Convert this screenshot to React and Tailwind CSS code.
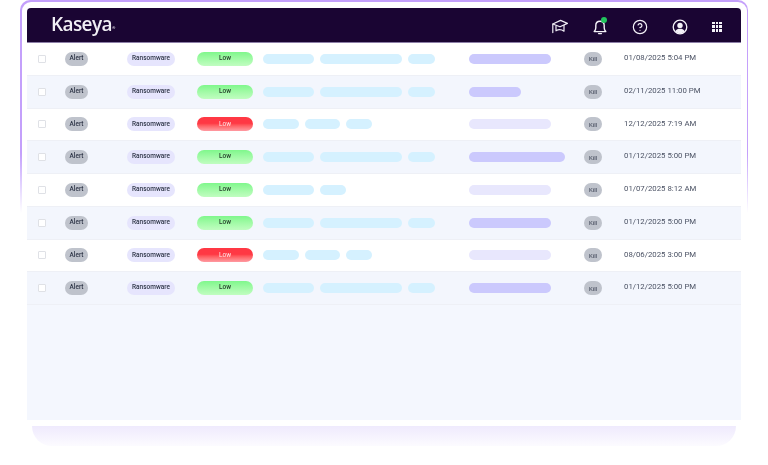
import React from 'react';
import { CircleHelp } from 'lucide-react';

const rows = [
  { level: 'ok', cyan: ['w-[51px]', 'w-[82px]', 'w-[27px]'], bar: 'w-[82px] bg-[#cbc9fd]', date: '01/08/2025 5:04 PM' },
  { level: 'ok', cyan: ['w-[51px]', 'w-[82px]', 'w-[27px]'], bar: 'w-[52px] bg-[#cbc9fd]', date: '02/11/2025 11:00 PM' },
  { level: 'bad', cyan: ['w-[36px]', 'w-[35px]', 'w-[26px]'], bar: 'w-[82px] bg-[#e8e7fd]', date: '12/12/2025 7:19 AM' },
  { level: 'ok', cyan: ['w-[51px]', 'w-[82px]', 'w-[27px]'], bar: 'w-[96px] bg-[#cbc9fd]', date: '01/12/2025 5:00 PM' },
  { level: 'ok', cyan: ['w-[51px]', 'w-[26px]'], bar: 'w-[82px] bg-[#e8e7fd]', date: '01/07/2025 8:12 AM' },
  { level: 'ok', cyan: ['w-[51px]', 'w-[82px]', 'w-[27px]'], bar: 'w-[82px] bg-[#cbc9fd]', date: '01/12/2025 5:00 PM' },
  { level: 'bad', cyan: ['w-[36px]', 'w-[35px]', 'w-[26px]'], bar: 'w-[82px] bg-[#e8e7fd]', date: '08/06/2025 3:00 PM' },
  { level: 'ok', cyan: ['w-[51px]', 'w-[82px]', 'w-[27px]'], bar: 'w-[82px] bg-[#cbc9fd]', date: '01/12/2025 5:00 PM' },
];

function CapIcon() {
  return (
    <svg width="16" height="16" viewBox="0 0 16 16" fill="none" stroke="#f0eef5" strokeWidth="1.2" strokeLinejoin="round">
      <path d="M.8 5 8.6 1.4 15.4 4.4 8 7.8Z" />
      <path d="M4 6.8v5c2.4-1.4 5.4-1.4 8 .4V6" />
      <path d="M.8 5v8.6" strokeLinecap="round" />
    </svg>
  );
}

function BellIcon() {
  return (
    <span className="relative block h-[16px] w-[16px]">
      <svg width="16" height="16" viewBox="0 0 16 16" fill="none" stroke="#f4f2f8" strokeWidth="1.4" strokeLinejoin="round">
        <path d="M2.2 12.6c1-.9 1.6-1.8 1.6-3.8V6.6C3.8 4 5.6 2.2 8 2.2s4.2 1.8 4.2 4.4v2.2c0 2 .6 2.9 1.6 3.8Z" />
        <path d="M6.6 14.6h2.8" strokeLinecap="round" />
      </svg>
      <span className="absolute right-[1px] top-[-2px] h-[6px] w-[6px] rounded-full bg-[#22c55e]" />
    </span>
  );
}

function UserIcon() {
  return (
    <svg width="16" height="16" viewBox="0 0 16 16">
      <circle cx="8" cy="8" r="6.8" fill="none" stroke="#f4f2f8" strokeWidth="1.3" />
      <circle cx="8" cy="6.4" r="2.7" fill="#f4f2f8" />
      <path d="M3.4 12.2C4.4 10.4 6 9.8 8 9.8s3.6.6 4.6 2.4C11.4 13.6 9.8 14.4 8 14.4s-3.4-.8-4.6-2.2Z" fill="#f4f2f8" />
    </svg>
  );
}

function GridIcon() {
  return (
    <span className="grid h-[10px] w-[10px] grid-cols-3 gap-[1px]">
      {Array.from({ length: 9 }).map((_, i) => (
        <span key={i} className="bg-[#f4f2f8]" />
      ))}
    </span>
  );
}

function Row({ row, alt }) {
  return (
    <div className={`grid h-[32.75px] grid-cols-[27px_62px_70px_66px_206px_115px_40px_1fr] items-center border-b border-[#eef0f6] pl-[11px] ${alt ? 'bg-[#f3f6fd]' : 'bg-white'}`}>
      <span className="h-[8px] w-[8px] rounded-[1px] border border-[#dfe1e6] bg-white" />
      <span className="flex h-[14px] w-[23px] items-center justify-center rounded-full bg-[#bfc3cc] text-[6.5px] font-medium text-[#2f3648]">Alert</span>
      <span className="flex h-[14px] w-[48px] items-center justify-center rounded-full bg-[#e6e5fd] text-[6.5px] font-medium text-[#2f3648]">Ransomware</span>
      {row.level === 'ok' ? (
        <span className="flex h-[14px] w-[56px] items-center justify-center rounded-full bg-gradient-to-b from-[#7ff78c] to-[#c0fdc0] text-[6.5px] font-medium text-[#26402c]">Low</span>
      ) : (
        <span className="flex h-[14px] w-[56px] items-center justify-center rounded-full bg-gradient-to-b from-[#ff3844] from-[45%] to-[#ff9aa2] text-[6.5px] text-[#ffe3e5]">Low</span>
      )}
      <div className="flex gap-[6px]">
        {row.cyan.map((w, i) => (
          <span key={i} className={`h-[10px] rounded-full bg-[#d5f1ff] ${w}`} />
        ))}
      </div>
      <span className={`h-[10px] rounded-full ${row.bar}`} />
      <span className="flex h-[14px] w-[18px] items-center justify-center rounded-full bg-[#bfc3cc] text-[6px] text-[#2f3648]">Kill</span>
      <span className="-translate-y-[1px] whitespace-nowrap text-[7.8px] text-[#4a5163]">{row.date}</span>
    </div>
  );
}

export default function App() {
  return (
    <div className="h-[465px] w-[768px] overflow-hidden bg-white font-['Roboto',sans-serif] blur-[0.45px]">
      {/* Frame, its purple edge fades out part way down */}
      <div className="ml-[20px] w-[728px] rounded-t-[10px] bg-gradient-to-b from-[#c4a0fb] from-[36%] to-white to-[50%] px-[1.5px] pt-[1.5px]">
        <div className="rounded-t-[9px] bg-white px-[5.5px] pb-[6px] pt-[6.5px]">
          <div className="flex h-[412px] flex-col bg-[#f4f7fe]">
            {/* Top bar */}
            <div className="flex h-[35px] shrink-0 items-center justify-between rounded-t-[4px] border-b border-[#8d7fa8] bg-[#1a0533] pl-[24px] pr-[19px]">
              <span className="-translate-y-[1px] font-['Open_Sans',sans-serif] text-[19px] font-semibold tracking-[-0.6px] text-[#f1eff5]">
                Kaseya<sup className="text-[4px]">®</sup>
              </span>
              <div className="flex items-center gap-[24px] pt-[3px]">
                <CapIcon />
                <BellIcon />
                <CircleHelp size={16} color="#f4f2f8" strokeWidth={1.8} />
                <UserIcon />
                <GridIcon />
              </div>
            </div>

            {rows.map((row, i) => (
              <Row key={i} row={row} alt={i % 2 === 1} />
            ))}
          </div>
        </div>
      </div>

      {/* Soft shadow under the frame */}
      <div className="ml-[32px] h-[20px] w-[704px] rounded-b-[20px] bg-gradient-to-b from-[#efeafd] to-[#fcfbff]" />
    </div>
  );
}
